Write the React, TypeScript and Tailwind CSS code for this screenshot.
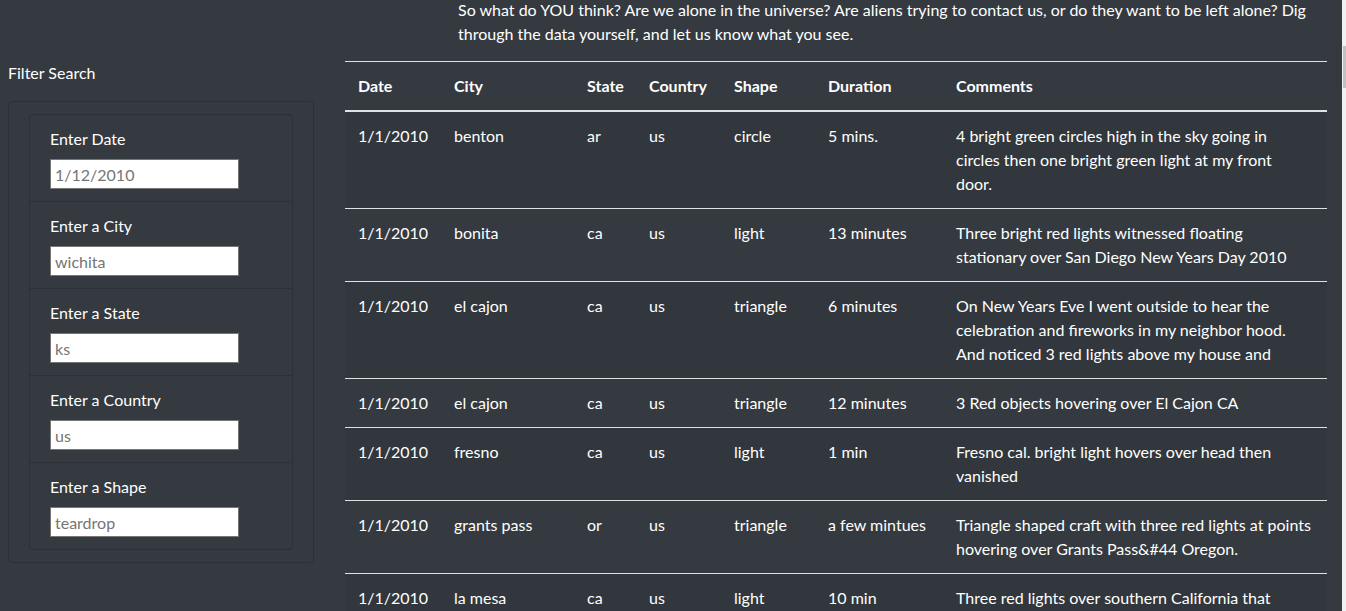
import React from "react";

const font = { fontFamily: "Lato, 'Noto Sans', 'Liberation Sans', sans-serif" };

const filters = [
  { label: "Enter Date", ph: "1/12/2010" },
  { label: "Enter a City", ph: "wichita" },
  { label: "Enter a State", ph: "ks" },
  { label: "Enter a Country", ph: "us" },
  { label: "Enter a Shape", ph: "teardrop" },
];

type Row = {
  date: string;
  city: string;
  state: string;
  country: string;
  shape: string;
  duration: string;
  comments: string[];
};

const rows: Row[] = [
  {
    date: "1/1/2010",
    city: "benton",
    state: "ar",
    country: "us",
    shape: "circle",
    duration: "5 mins.",
    comments: [
      "4 bright green circles high in the sky going in",
      "circles then one bright green light at my front",
      "door.",
    ],
  },
  {
    date: "1/1/2010",
    city: "bonita",
    state: "ca",
    country: "us",
    shape: "light",
    duration: "13 minutes",
    comments: ["Three bright red lights witnessed floating", "stationary over San Diego New Years Day 2010"],
  },
  {
    date: "1/1/2010",
    city: "el cajon",
    state: "ca",
    country: "us",
    shape: "triangle",
    duration: "6 minutes",
    comments: [
      "On New Years Eve I went outside to hear the",
      "celebration and fireworks in my neighbor hood.",
      "And noticed 3 red lights above my house and",
    ],
  },
  {
    date: "1/1/2010",
    city: "el cajon",
    state: "ca",
    country: "us",
    shape: "triangle",
    duration: "12 minutes",
    comments: ["3 Red objects hovering over El Cajon CA"],
  },
  {
    date: "1/1/2010",
    city: "fresno",
    state: "ca",
    country: "us",
    shape: "light",
    duration: "1 min",
    comments: ["Fresno cal. bright light hovers over head then", "vanished"],
  },
  {
    date: "1/1/2010",
    city: "grants pass",
    state: "or",
    country: "us",
    shape: "triangle",
    duration: "a few mintues",
    comments: ["Triangle shaped craft with three red lights at points", "hovering over Grants Pass&#44 Oregon."],
  },
  {
    date: "1/1/2010",
    city: "la mesa",
    state: "ca",
    country: "us",
    shape: "light",
    duration: "10 min",
    comments: ["Three red lights over southern California that", "appeared to move slowly across the sky."],
  },
];

const cell = "pl-[13px] pr-[11px] py-3 align-top leading-6";

export default function App() {
  return (
    <div className="flex h-[611px] w-full overflow-hidden bg-[#343a40] text-white text-base" style={font}>
      <div className="flex min-w-0 flex-1">
        <aside className="w-[330px] shrink-0 pl-2 pt-[61px]">
          <div className="leading-6 text-[16px] text-white">Filter Search</div>
          <div className="mt-4 w-[306px] rounded border border-[rgba(0,0,0,0.14)] px-5 py-3">
            <ul className="rounded border border-[rgba(0,0,0,0.14)]">
              {filters.map((f, i) => (
                <li
                  key={f.label}
                  className={
                    i < filters.length - 1
                      ? "border-b border-[rgba(0,0,0,0.14)] px-5 pt-3 pb-3"
                      : "px-5 pt-3 pb-3"
                  }
                >
                  <label className="block leading-6 text-white">{f.label}</label>
                  <input
                    type="text"
                    placeholder={f.ph}
                    className="mt-2 block h-[30px] w-[189px] border border-[#767676] bg-white px-1 text-[16px] text-black placeholder:text-[#757575]"
                    style={font}
                  />
                </li>
              ))}
            </ul>
          </div>
        </aside>
        <main className="min-w-0 flex-1 px-[15px]">
          <p className="mt-[-2px] mb-[15px] pl-[113px] leading-6 text-white">
            So what do YOU think? Are we alone in the universe? Are aliens trying to contact us, or do they want to be
            left alone? Dig through the data yourself, and let us know what you see.
          </p>
          <table className="w-full table-fixed border-collapse text-left text-white">
            <colgroup>
              <col className="w-[96px]" />
              <col className="w-[133px]" />
              <col className="w-[62px]" />
              <col className="w-[85px]" />
              <col className="w-[94px]" />
              <col className="w-[128px]" />
              <col />
            </colgroup>
            <thead>
              <tr className="border-t border-[#dee2e6]">
                {["Date", "City", "State", "Country", "Shape", "Duration", "Comments"].map((h) => (
                  <th key={h} className="border-b-2 border-[#dee2e6] pl-[13px] pr-[11px] py-3 align-bottom font-bold leading-6">
                    {h}
                  </th>
                ))}
              </tr>
            </thead>
            <tbody>
              {rows.map((r, i) => (
                <tr
                  key={i}
                  className={
                    i % 2 === 0
                      ? "border-t border-[#dee2e6] bg-[rgba(0,0,0,0.05)] first:border-t-0"
                      : "border-t border-[#dee2e6]"
                  }
                >
                  <td className={cell}>{r.date}</td>
                  <td className={cell}>{r.city}</td>
                  <td className={cell}>{r.state}</td>
                  <td className={cell}>{r.country}</td>
                  <td className={cell}>{r.shape}</td>
                  <td className={cell + " whitespace-nowrap"}>{r.duration}</td>
                  <td className={cell}>
                    {r.comments.map((c, j) => (
                      <span key={j} className="block whitespace-nowrap">
                        {c}
                      </span>
                    ))}
                  </td>
                </tr>
              ))}
            </tbody>
          </table>
        </main>
      </div>
      <div className="flex w-[4px] shrink-0 flex-col bg-[#f1f1f1]">
        <div className="h-[46px]" />
        <div className="ml-[1px] h-[42px] w-[3px] bg-[#c1c1c1]" />
      </div>
    </div>
  );
}
